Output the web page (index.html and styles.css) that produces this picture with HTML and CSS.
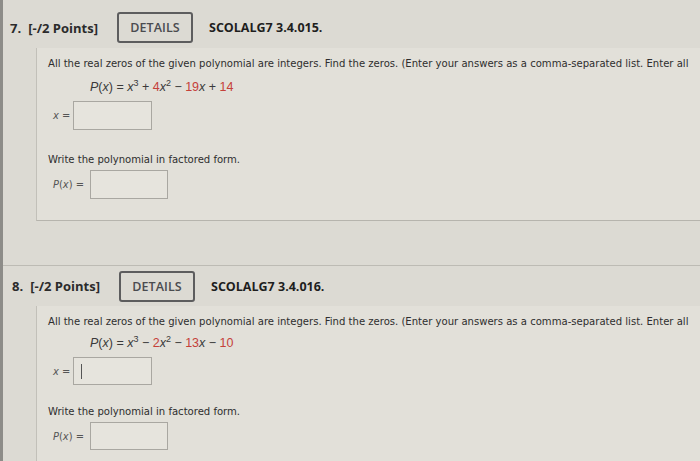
FILE: index.html
```html
<!DOCTYPE html>
<html>
<head>
<meta charset="utf-8">
<link rel="stylesheet" href="styles.css">
</head>
<body>
<div class="page">
  <section class="question q7">
    <div class="qhead">
      <span class="qnum"><span class="n">7.</span>[-/2 Points]</span>
      <span class="details">DETAILS</span>
      <span class="qid">SCOLALG7 3.4.015.</span>
    </div>
    <div class="qbody">
      <p class="prompt">All the real zeros of the given polynomial are integers. Find the zeros. (Enter your answers as a comma-separated list. Enter all</p>
      <p class="formula"><i>P</i>(<i>x</i>) = <i>x</i><sup>3</sup> + <span class="red">4</span><i>x</i><sup>2</sup> − <span class="red">19</span><i>x</i> + <span class="red">14</span></p>
      <div class="answer ax"><span class="lbl"><i>x</i> =</span><span class="box bx"></span></div>
      <p class="prompt2">Write the polynomial in factored form.</p>
      <div class="answer ap"><span class="lbl"><i>P</i>(<i>x</i>) =</span><span class="box bp"></span></div>
    </div>
  </section>
  <section class="question q8">
    <div class="qhead">
      <span class="qnum"><span class="n">8.</span>[-/2 Points]</span>
      <span class="details">DETAILS</span>
      <span class="qid">SCOLALG7 3.4.016.</span>
    </div>
    <div class="qbody">
      <p class="prompt">All the real zeros of the given polynomial are integers. Find the zeros. (Enter your answers as a comma-separated list. Enter all</p>
      <p class="formula"><i>P</i>(<i>x</i>) = <i>x</i><sup>3</sup> − <span class="red">2</span><i>x</i><sup>2</sup> − <span class="red">13</span><i>x</i> − <span class="red">10</span></p>
      <div class="answer ax"><span class="lbl"><i>x</i> =</span><span class="box bx"><span class="caret"></span></span></div>
      <p class="prompt2">Write the polynomial in factored form.</p>
      <div class="answer ap"><span class="lbl"><i>P</i>(<i>x</i>) =</span><span class="box bp"></span></div>
    </div>
  </section>
</div>
</body>
</html>
```
FILE: styles.css
```css
html, body {
  margin: 0;
  padding: 0;
}
body {
  background: #dcdad3;
  width: 700px;
  height: 461px;
  overflow: hidden;
}
.page {
  border-left: 3px solid #8d8c88;
  min-height: 461px;
  box-sizing: border-box;
  padding-top: 7px;
}
.q8 {
  margin-top: 44px;
  border-top: 1px solid #bdbbb4;
}
.qhead {
  display: flex;
  align-items: center;
  height: 41px;
  padding-left: 7px;
  font-family: "Open Sans", "Noto Sans", sans-serif;
  color: #2b2b2b;
}
.q8 .qhead {
  height: 40px;
  padding-left: 9px;
}
.qnum {
  font-weight: 700;
  font-size: 13px;
  width: 107px;
}
.qnum .n {
  margin-right: 7px;
}
.details {
  box-sizing: border-box;
  width: 76px;
  height: 31px;
  border: 2px solid #5d5d5e;
  border-radius: 3px;
  display: flex;
  align-items: center;
  justify-content: center;
  font-size: 12.5px;
  font-weight: 600;
  color: #4a4b4f;
  letter-spacing: 0.1px;
}
.qid {
  margin-left: 16px;
  font-weight: 700;
  font-size: 12.5px;
  color: #1e1e1e;
}
.qbody {
  box-sizing: border-box;
  margin-left: 33px;
  border-left: 1px solid #c2c0b9;
  border-bottom: 1px solid #b6b4ad;
  background: #e2e0d9;
  padding: 9px 0 0 11px;
  height: 173px;
  font-family: "DejaVu Sans Condensed", "DejaVu Sans", sans-serif;
  color: #333;
  white-space: nowrap;
  overflow: hidden;
}
.q8 .qbody {
  border-bottom: 0;
  height: 170px;
}
p {
  margin: 0;
}
.prompt {
  font-size: 11.2px;
  line-height: 14px;
  color: #2e2e2e;
}
.formula {
  margin: 9px 0 0 42px;
  font-family: "Liberation Sans", Arial, sans-serif;
  font-size: 12.5px;
  line-height: 14px;
  color: #3a3a3a;
}
.q8 .formula {
  margin-top: 7px;
}
.formula sup {
  font-size: 9px;
  vertical-align: 5px;
  line-height: 0;
}
.red {
  color: #c5413a;
}
.answer {
  display: flex;
  align-items: center;
}
.ax {
  margin-top: 7px;
}
.lbl {
  font-size: 11px;
  color: #555;
  margin-left: 5px;
  width: 20px;
}
.ap .lbl {
  width: 37px;
}
.box {
  box-sizing: border-box;
  height: 29px;
  border: 1px solid #a9a7a1;
  background: #e6e4dd;
  display: flex;
  align-items: center;
}
.q8 .box {
  height: 28px;
}
.bx {
  width: 79px;
}
.bp {
  width: 78px;
}
.caret {
  width: 1px;
  height: 15px;
  background: #555;
  margin-left: 7px;
}
.prompt2 {
  font-size: 11.2px;
  line-height: 14px;
  color: #2e2e2e;
  margin-top: 23px;
}
.q8 .prompt2 {
  margin-top: 20px;
}
.ap {
  margin-top: 3px;
}
```
